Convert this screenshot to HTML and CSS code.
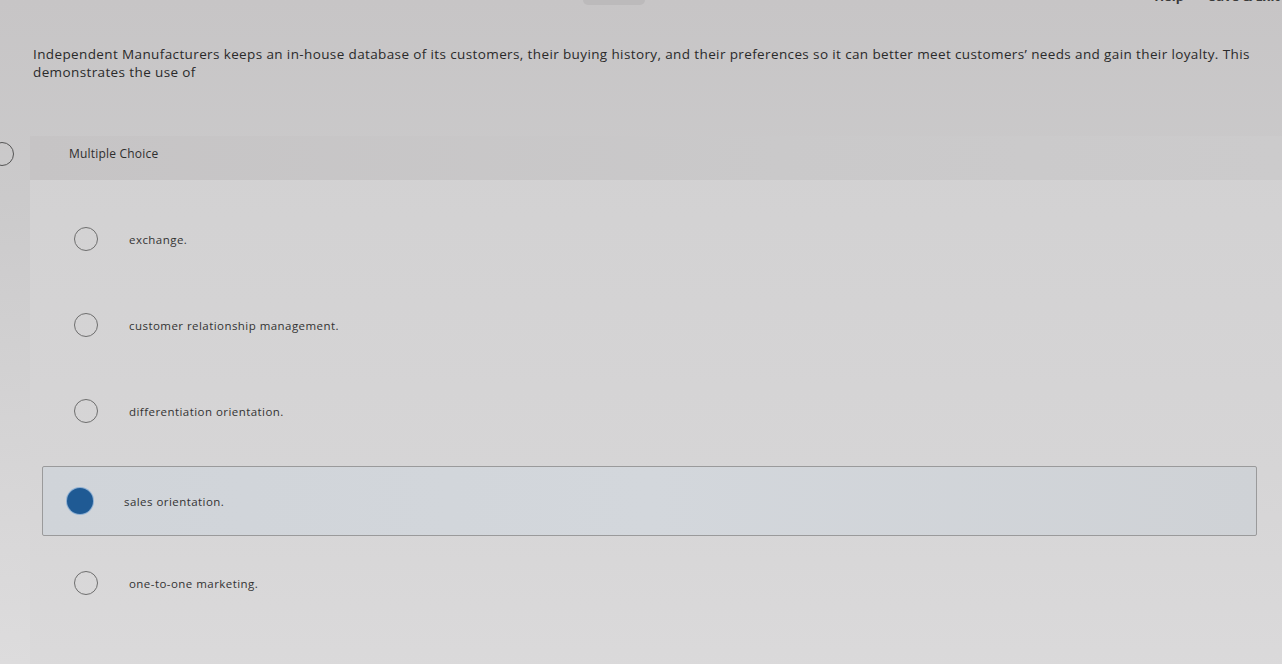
FILE: index.html
```html
<!DOCTYPE html>
<html>
<head>
<meta charset="utf-8">
<link rel="stylesheet" href="styles.css">
</head>
<body>
<div class="topbar">
  <div class="tab"></div>
  <div class="nav">
    <span class="nav-item">Help</span>
    <span class="nav-item">Save &amp; Exit</span>
  </div>
</div>
<p class="question">Independent Manufacturers keeps an in-house database of its customers, their buying history, and their preferences so it can better meet customers’ needs and gain their loyalty. This demonstrates the use of</p>
<div class="card">
  <div class="side-btn"></div>
  <div class="card-head">Multiple Choice</div>
  <div class="options">
    <div class="option"><span class="radio"></span><span class="label">exchange.</span></div>
    <div class="option"><span class="radio"></span><span class="label">customer relationship management.</span></div>
    <div class="option"><span class="radio"></span><span class="label">differentiation orientation.</span></div>
    <div class="option selected"><span class="radio"></span><span class="label">sales orientation.</span></div>
    <div class="option"><span class="radio"></span><span class="label">one-to-one marketing.</span></div>
  </div>
</div>
</body>
</html>
```
FILE: styles.css
```css
html, body {
  margin: 0;
  padding: 0;
}
body {
  width: 1282px;
  height: 664px;
  overflow: hidden;
  font-family: "Open Sans", "Liberation Sans", sans-serif;
  color: #2b2b2b;
  background: linear-gradient(180deg, #c7c5c6 0%, #cbcacb 30%, #d6d5d6 70%, #dddcdd 100%);
}
.topbar {
  position: relative;
  height: 6px;
  overflow: hidden;
}
.tab {
  position: absolute;
  left: 583px;
  top: -6px;
  width: 62px;
  height: 11px;
  border-radius: 5px;
  background: #bcbabb;
}
.nav {
  display: flex;
  justify-content: flex-end;
  gap: 25px;
  margin-top: -13px;
  padding-right: 2px;
}
.nav-item {
  font-size: 13px;
  font-weight: 700;
  line-height: 18px;
  color: #3a3a3a;
}
.question {
  margin: 39px 26px 0 33px;
  font-size: 13.5px;
  line-height: 18px;
  letter-spacing: 0.38px;
  color: #2a2a2a;
}
.card {
  position: relative;
  margin: 55px 0 0 30px;
  background: linear-gradient(180deg, #d2d1d2 0%, #d6d5d6 60%, #dbdadb 100%);
  height: 560px;
}
.side-btn {
  position: absolute;
  left: -40px;
  top: 6px;
  width: 22px;
  height: 22px;
  border: 1.5px solid #555;
  border-radius: 50%;
}
.card-head {
  height: 44px;
  box-sizing: border-box;
  padding: 9px 0 0 39px;
  font-size: 12px;
  letter-spacing: 0.2px;
  color: #2e2e2e;
  background: linear-gradient(90deg, #c6c4c5 0%, #cac9ca 60%, #cccbcc 100%);
}
.options {
  display: flex;
  flex-direction: column;
  padding: 16px 25px 0 12px;
}
.option {
  height: 70px;
  margin: 8px 0;
  display: flex;
  align-items: center;
  gap: 31px;
  padding-left: 31px;
  box-sizing: border-box;
  border: 1px solid transparent;
  border-radius: 2px;
}
.radio {
  flex: none;
  width: 22px;
  height: 22px;
  border: 1.5px solid #6e6e6e;
  border-radius: 50%;
}
.label {
  font-size: 11.5px;
  letter-spacing: 0.45px;
  color: #333;
}
.option.selected {
  background: linear-gradient(90deg, #d0d4d9 0%, #d3d7dc 50%, #cfd2d6 100%);
  border-color: #9a9a9b;
  padding-left: 24px;
  margin-top: 12px;
  margin-bottom: 4px;
}
.option.selected .radio {
  width: 26px;
  height: 26px;
  border: none;
  background: #1f5a94;
  box-shadow: 0 0 0 1px #8fb0d3;
}
```
